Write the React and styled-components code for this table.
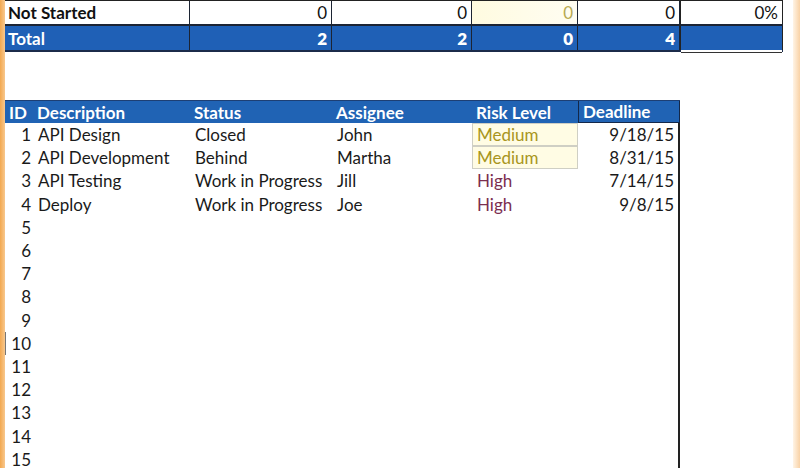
import styled, { createGlobalStyle } from "styled-components";

const GlobalStyle = createGlobalStyle`
  *, *::before, *::after {
    box-sizing: border-box;
  }
  html, body {
    margin: 0;
    padding: 0;
    background: #ffffff;
  }
  body {
    font-family: Lato, "Liberation Sans", sans-serif;
    font-size: 17px;
    color: #1a1a1a;
  }
`;

const summary = [
  { label: "Not Started", values: ["0", "0", "0", "0", "0%"], total: false },
  { label: "Total", values: ["2", "2", "0", "4", ""], total: true },
];

const tasks = [
  { id: 1, desc: "API Design", status: "Closed", who: "John", risk: "Medium", due: "9/18/15" },
  { id: 2, desc: "API Development", status: "Behind", who: "Martha", risk: "Medium", due: "8/31/15" },
  { id: 3, desc: "API Testing", status: "Work in Progress", who: "Jill", risk: "High", due: "7/14/15" },
  { id: 4, desc: "Deploy", status: "Work in Progress", who: "Joe", risk: "High", due: "9/8/15" },
];
const emptyRows = [5, 6, 7, 8, 9, 10, 11, 12, 13, 14, 15];

function App() {
  return (
    <Page>
      <GlobalStyle />
      <EdgeStrip side="left" />
      <Sheet>
        <Summary>
          {summary.map(row => (
            <SummaryRow key={row.label} total={row.total}>
              <LabelCell total={row.total}>{row.label}</LabelCell>
              {row.values.map((v, i) => (
                <NumCell key={i} total={row.total} highlight={!row.total && i === 2} last={i === 4}>
                  {v}
                </NumCell>
              ))}
            </SummaryRow>
          ))}
        </Summary>

        <Tasks>
          <HeadRow>
            <HeadCell>ID</HeadCell>
            <HeadCell>Description</HeadCell>
            <HeadCell>Status</HeadCell>
            <HeadCell>Assignee</HeadCell>
            <HeadCell>Risk Level</HeadCell>
            <HeadCell boxed>Deadline</HeadCell>
          </HeadRow>
          {tasks.map(t => (
            <TaskRow key={t.id}>
              <IdCell>{t.id}</IdCell>
              <Cell>{t.desc}</Cell>
              <Cell>{t.status}</Cell>
              <Cell>{t.who}</Cell>
              <RiskCell level={t.risk}>{t.risk}</RiskCell>
              <DateCell>{t.due}</DateCell>
            </TaskRow>
          ))}
          {emptyRows.map(n => (
            <TaskRow key={n}>
              <IdCell marked={n === 10}>{n}</IdCell>
              <Cell />
              <Cell />
              <Cell />
              <Cell />
              <DateCell />
            </TaskRow>
          ))}
        </Tasks>
      </Sheet>
      <EdgeStrip side="right" />
    </Page>
  );
}

const Page = styled.div`
  display: flex;
  width: 800px;
  height: 468px;
  overflow: hidden;
  background: #ffffff;
`;

const EdgeStrip = styled.div`
  flex: 0 0 ${p => (p.side === "left" ? "5px" : "7px")};
  background: ${p =>
    p.side === "left"
      ? "linear-gradient(90deg, #f2a850, #f8c88e)"
      : "linear-gradient(90deg, #fff4e6, #f9d2a6)"};
`;

const Sheet = styled.div`
  flex: 1;
  display: flex;
  flex-direction: column;
`;

const Summary = styled.div`
  display: flex;
  flex-direction: column;
  width: 778px;
  border-top: 1px solid #222;
`;

const SummaryRow = styled.div`
  display: grid;
  grid-template-columns: 185px 142px 140px 106px 102px 103px;
  height: ${p => (p.total ? "26px" : "25px")};
  background: ${p => (p.total ? "#1f60b6" : "#ffffff")};
  border-bottom: ${p => (p.total ? "2px solid #1b2b4a" : "2px solid #1c2433")};
`;

const LabelCell = styled.div`
  display: flex;
  align-items: center;
  padding-left: 3px;
  font-weight: 700;
  font-size: 17px;
  color: ${p => (p.total ? "#ffffff" : "#111")};
  border-right: 1px solid #1c2433;
`;

const NumCell = styled.div`
  display: flex;
  align-items: center;
  justify-content: flex-end;
  padding-right: 4px;
  font-size: 17px;
  font-weight: ${p => (p.total ? 800 : 400)};
  color: ${p => (p.total ? "#ffffff" : p.highlight ? "#b8aa52" : "#111")};
  background: ${p => (p.highlight ? "linear-gradient(90deg, #fffbe0, #fffdf2)" : "transparent")};
  border-right: ${p => (p.last ? "1px solid #222" : "1px solid #1c2433")};
  border-left: ${p => (p.last ? "1px solid #222" : "none")};
  ${p => p.last && p.total && "box-shadow: 0 3px 0 -1px #fff, 0 4px 0 -1px #333;"}
`;

const Tasks = styled.div`
  display: flex;
  flex-direction: column;
  margin-top: 48px;
  width: 675px;
`;

const grid = `
  display: grid;
  grid-template-columns: 28px 157px 142px 140px 106px 102px;
`;

const HeadRow = styled.div`
  ${grid}
  height: 23px;
  background: #2063b4;
  border-top: 1px solid #1d3f74;
`;

const HeadCell = styled.div`
  display: flex;
  align-items: center;
  padding-left: 4px;
  font-weight: 700;
  font-size: 17px;
  color: #ffffff;
  ${p => p.boxed && "border: 1px solid #13284a; border-top: none; padding-left: 4px;"}
`;

const TaskRow = styled.div`
  ${grid}
  height: 23.2px;
`;

const Cell = styled.div`
  display: flex;
  align-items: center;
  padding-left: 5px;
  font-size: 17px;
  color: #1a1a1a;
  white-space: nowrap;
`;

const IdCell = styled(Cell)`
  justify-content: flex-end;
  padding-left: 0;
  padding-right: 2px;
  ${p => p.marked && "box-shadow: inset 1px 0 0 #777;"}
`;

const RiskCell = styled(Cell)`
  color: ${p => (p.level === "Medium" ? "#a89520" : "#7b2e4f")};
  background: ${p => (p.level === "Medium" ? "#fffce4" : "transparent")};
  ${p => p.level === "Medium" && "box-shadow: inset 0 0 0 1px #cfcfc4;"}
`;

const DateCell = styled(Cell)`
  justify-content: flex-end;
  padding-right: 4px;
  border-right: 2px solid #222;
`;

export default App;
